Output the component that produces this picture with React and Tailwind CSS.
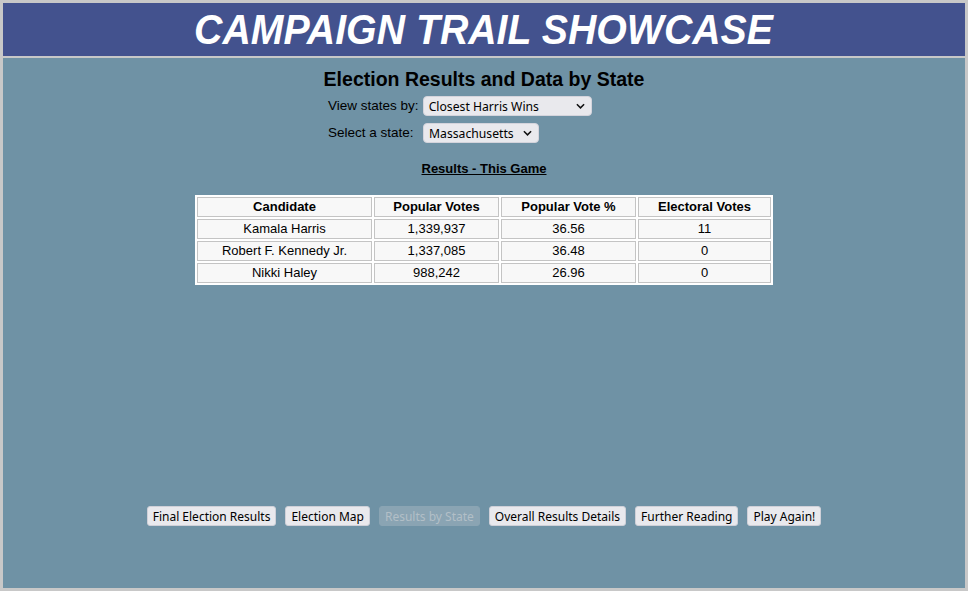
import React, { useState } from "react";

const results = [
  { name: "Kamala Harris", votes: "1,339,937", pct: "36.56", ev: "11" },
  { name: "Robert F. Kennedy Jr.", votes: "1,337,085", pct: "36.48", ev: "0" },
  { name: "Nikki Haley", votes: "988,242", pct: "26.96", ev: "0" },
];

const buttons = [
  "Final Election Results",
  "Election Map",
  "Results by State",
  "Overall Results Details",
  "Further Reading",
  "Play Again!",
];

function Chevron() {
  return (
    <svg width="9" height="6" viewBox="0 0 10 6" className="ml-auto">
      <path d="M1 1l4 4 4-4" fill="none" stroke="#111" strokeWidth="1.7" />
    </svg>
  );
}

function SelectBox({ value, width }) {
  return (
    <div
      className={`flex items-center h-[20px] pl-[5px] pr-[6px] rounded-[4px] bg-[#e9e9ed] border border-[#d4d4dc] text-[12.2px] leading-[20px] text-black font-['Noto_Sans',sans-serif] ${width}`}
    >
      <span className="pt-[1px]">{value}</span>
      <Chevron />
    </div>
  );
}

const cell = "h-[20px] p-0 text-center border border-[#c4c4c4] bg-[#f8f8f8]";

export default function App() {
  const [active] = useState("Results by State");

  return (
    <div className="w-[968px] h-[591px] bg-[#c8c8c8] p-[3px] font-['Liberation_Sans',Arial,sans-serif]">
      {/* HEADER */}
      <div className="h-[53px] bg-[#43528e] flex items-center justify-center">
        <h1 className="text-white italic font-bold text-[42px] leading-none scale-x-[0.935]">
          CAMPAIGN TRAIL SHOWCASE
        </h1>
      </div>

      {/* CONTENT */}
      <div className="mt-[2px] h-[530px] bg-[#6f92a5] flex flex-col items-center">
        <h2 className="mt-[9px] text-[19.5px] font-bold text-black leading-[24px]">
          Election Results and Data by State
        </h2>

        {/* STATE PICKERS */}
        <div className="mt-[5px] ml-[-48px] w-[264px] flex flex-col gap-[7px] text-[13.5px] leading-[20px] text-black">
          <div className="flex items-center">
            <span className="w-[95px]">View states by:</span>
            <SelectBox value="Closest Harris Wins" width="w-[170px]" />
          </div>
          <div className="flex items-center">
            <span className="w-[95px]">Select a state:</span>
            <SelectBox value="Massachusetts" width="w-[116px]" />
          </div>
        </div>

        <div className="mt-[18px] text-[13px] leading-[16px] font-bold underline text-black">
          Results - This Game
        </div>

        {/* RESULTS TABLE */}
        <table className="mt-[18px] bg-white border-separate border-spacing-[2px] text-[13px] leading-[18px] text-black">
          <thead>
            <tr>
              <th className={`${cell} w-[175px] font-bold`}>Candidate</th>
              <th className={`${cell} w-[125px] font-bold`}>Popular Votes</th>
              <th className={`${cell} w-[135px] font-bold`}>Popular Vote %</th>
              <th className={`${cell} w-[133px] font-bold`}>Electoral Votes</th>
            </tr>
          </thead>
          <tbody>
            {results.map((r) => (
              <tr key={r.name}>
                <td className={cell}>{r.name}</td>
                <td className={cell}>{r.votes}</td>
                <td className={cell}>{r.pct}</td>
                <td className={cell}>{r.ev}</td>
              </tr>
            ))}
          </tbody>
        </table>

        {/* NAV BUTTONS */}
        <div className="mt-auto mb-[62px] flex gap-[9px] font-['Noto_Sans',sans-serif] text-[12px]">
          {buttons.map((b) =>
            b === active ? (
              <button
                key={b}
                disabled
                className="h-[20px] px-[5px] pt-[1px] rounded-[3px] bg-[#8aa4b3] border border-[#8aa4b3] text-[#b2bfc7] leading-none"
              >
                {b}
              </button>
            ) : (
              <button
                key={b}
                className="h-[20px] px-[5px] pt-[1px] rounded-[3px] bg-[#e9e9ed] border border-[#cfd0d8] text-black leading-none"
              >
                {b}
              </button>
            )
          )}
        </div>
      </div>
    </div>
  );
}
